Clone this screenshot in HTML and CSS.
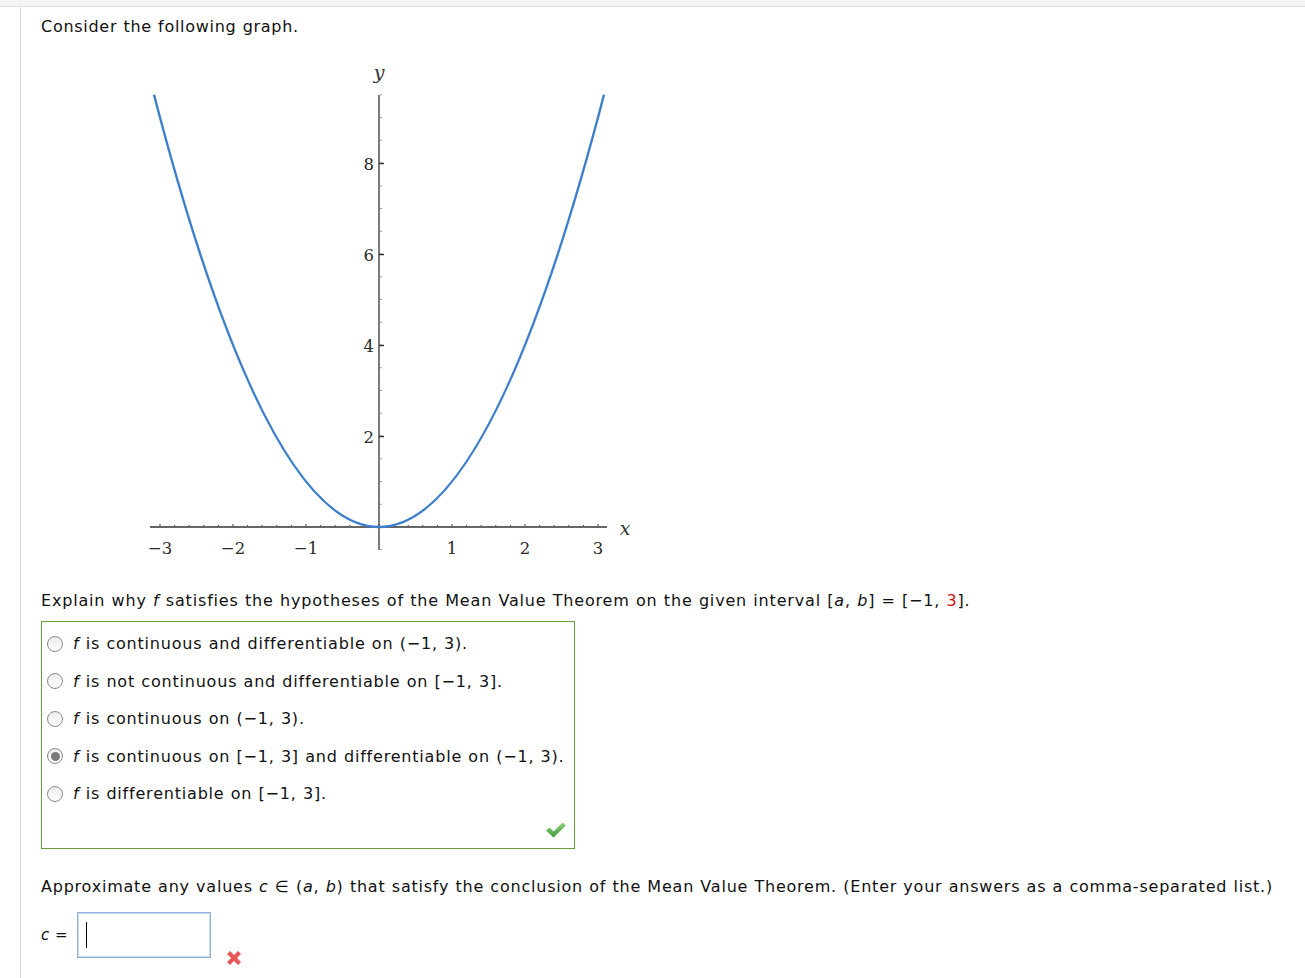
FILE: index.html
```html
<!DOCTYPE html>
<html>
<head>
<meta charset="utf-8">
<link rel="stylesheet" href="styles.css">
</head>
<body>
<div class="topbar"></div>
<div class="page">
  <div class="content">
    <p class="intro">Consider the following graph.</p>
    <svg class="graph" width="640" height="510" viewBox="41 55 640 510">
      <g class="axes">
        <line x1="150" y1="527" x2="607" y2="527"/>
        <line x1="379" y1="95" x2="379" y2="550"/>
        <line class="tick" x1="159.5" y1="525.5" x2="600" y2="525.5" stroke-width="3" stroke-dasharray="1 13.6"/>
        <line class="tick" x1="159.5" y1="524.5" x2="600" y2="524.5" stroke-width="5" stroke-dasharray="1 72"/>
        <line class="tick" x1="381" y1="94.25" x2="381" y2="551" stroke-width="4" stroke-dasharray="1 21.75"/>
        <path d="M379 436.5h5M379 345.5h5M379 254.5h5M379 163.5h5"/>
      </g>
      <path class="curve" d="M154 94.75 Q379 959.25 604 94.75"/>
      <g class="ticklabels">
        <text x="160" y="554" text-anchor="middle">−3</text>
        <text x="233" y="554" text-anchor="middle">−2</text>
        <text x="306" y="554" text-anchor="middle">−1</text>
        <text x="452" y="554" text-anchor="middle">1</text>
        <text x="525" y="554" text-anchor="middle">2</text>
        <text x="598" y="554" text-anchor="middle">3</text>
        <text x="374" y="443" text-anchor="end">2</text>
        <text x="374" y="352" text-anchor="end">4</text>
        <text x="374" y="261" text-anchor="end">6</text>
        <text x="374" y="170" text-anchor="end">8</text>
      </g>
      <text class="axislabel" x="379" y="79" text-anchor="middle">y</text>
      <text class="axislabel" x="625" y="535" text-anchor="middle">x</text>
    </svg>
    <p class="question">Explain why <i>f</i> satisfies the hypotheses of the Mean Value Theorem on the given interval [<i>a</i>, <i>b</i>] = [−1, <span class="red">3</span>].</p>
    <div class="choices">
      <label class="choice"><span class="radio"></span><span><i>f</i> is continuous and differentiable on (−1, 3).</span></label>
      <label class="choice"><span class="radio"></span><span><i>f</i> is not continuous and differentiable on [−1, 3].</span></label>
      <label class="choice"><span class="radio"></span><span><i>f</i> is continuous on (−1, 3).</span></label>
      <label class="choice"><span class="radio checked"></span><span><i>f</i> is continuous on [−1, 3] and differentiable on (−1, 3).</span></label>
      <label class="choice"><span class="radio"></span><span><i>f</i> is differentiable on [−1, 3].</span></label>
      <div class="mark">
        <svg width="22" height="18" viewBox="0 0 22 18">
          <defs>
            <linearGradient id="g" x1="0" y1="0" x2="0" y2="1">
              <stop offset="0" stop-color="#8fd17e"/>
              <stop offset="1" stop-color="#3e9a3a"/>
            </linearGradient>
          </defs>
          <path d="M1 9.5 L4.5 6.5 L8.5 10.5 L17.5 1.5 L21 4.5 L8.5 16.5 Z" fill="url(#g)"/>
        </svg>
      </div>
    </div>
    <p class="question2">Approximate any values <i>c</i> ∈ (<i>a</i>, <i>b</i>) that satisfy the conclusion of the Mean Value Theorem. (Enter your answers as a comma-separated list.)</p>
    <div class="answer">
      <span class="clabel"><i>c</i> =</span>
      <span class="input"><span class="caret"></span></span>
      <span class="wrong">
        <svg width="18" height="18" viewBox="0 0 18 18">
          <path d="M2 5 L5 2 L9 6 L13 2 L16 5 L12 9 L16 13 L13 16 L9 12 L5 16 L2 13 L6 9 Z" fill="#e85a5a"/>
        </svg>
      </span>
    </div>
  </div>
</div>
</body>
</html>
```
FILE: styles.css
```css
html, body {
  margin: 0;
  padding: 0;
  background: #ffffff;
}
body {
  font-family: "DejaVu Sans", Verdana, sans-serif;
  font-size: 16px;
  color: #111;
}
.topbar {
  height: 6px;
  background: #f5f5f5;
}
.page {
  border-top: 1px solid #e2e2e2;
}
.content {
  margin-left: 20px;
  border-left: 1px solid #d4d4d4;
  padding-left: 20px;
  padding-top: 10px;
  min-height: 971px;
  box-sizing: border-box;
}
p {
  margin: 0;
  line-height: 20px;
}
.intro, .question, .question2, .choice {
  letter-spacing: 0.72px;
  word-spacing: 0.4px;
}
.question {
  letter-spacing: 0.82px;
}
.question2 {
  letter-spacing: 0.78px;
}
.choice {
  letter-spacing: 0.8px;
}
.graph {
  display: block;
  margin-top: 18px;
}
.axes line, .axes path {
  stroke: #333;
  stroke-width: 1.3;
  fill: none;
}
.axes line.tick {
  stroke-width: inherit;
}
.curve {
  fill: none;
  stroke: #3d7fcc;
  stroke-width: 2.4;
}
.ticklabels text {
  font-family: "DejaVu Serif", "Liberation Serif", serif;
  font-size: 16.5px;
  fill: #2a2a2a;
}
.axislabel {
  font-family: "DejaVu Serif", "Liberation Serif", serif;
  font-style: italic;
  font-size: 19px;
  fill: #333;
}
.question {
  margin-top: 26px;
}
.red {
  color: #cc1111;
}
.choices {
  margin-top: 10px;
  width: 534px;
  height: 228px;
  box-sizing: border-box;
  border: 1px solid #6b9e3b;
  padding-top: 3px;
  display: flex;
  flex-direction: column;
}
.choice {
  height: 37.5px;
  display: flex;
  align-items: center;
  padding-left: 5px;
}
.radio {
  width: 16px;
  height: 16px;
  box-sizing: border-box;
  border: 1px solid #8a8a8a;
  border-radius: 50%;
  background: linear-gradient(#ececec, #ffffff);
  margin-right: 10px;
  flex: none;
  display: flex;
  align-items: center;
  justify-content: center;
}
.radio.checked::after {
  content: "";
  width: 9px;
  height: 9px;
  border-radius: 50%;
  background: #7a7a7a;
}
.mark {
  margin-top: auto;
  display: flex;
  justify-content: flex-end;
  padding-right: 7px;
  padding-bottom: 9px;
}
.mark svg {
  display: block;
}
.question2 {
  margin-top: 28px;
}
.answer {
  margin-top: 15px;
  display: flex;
  align-items: flex-start;
}
.clabel {
  font-size: 15px;
  line-height: 46px;
  width: 36px;
  letter-spacing: 0.5px;
}
.input {
  width: 134px;
  height: 46px;
  box-sizing: border-box;
  border: 1px solid #8fb1dc;
  box-shadow: inset 0 0 0 1px #c9daf0;
  display: flex;
  align-items: center;
  padding-left: 8px;
}
.caret {
  width: 1px;
  height: 26px;
  background: #000;
}
.wrong {
  margin-top: 37px;
  margin-left: 14px;
}
.wrong svg {
  display: block;
}
```
